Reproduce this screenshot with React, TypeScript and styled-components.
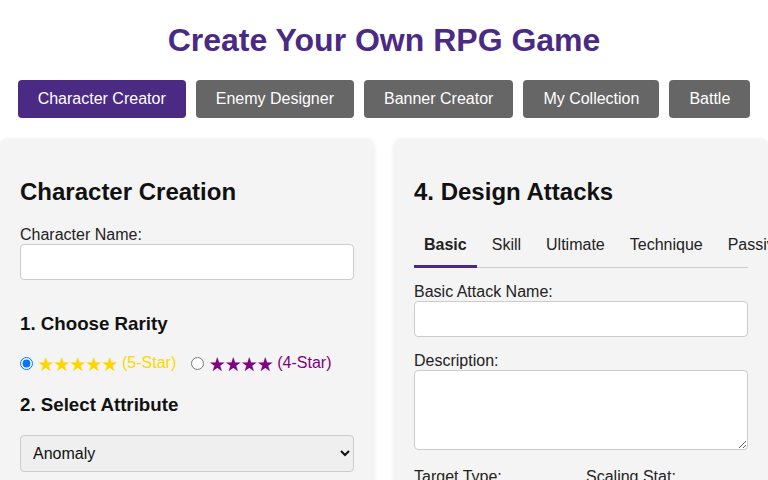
import styled, { createGlobalStyle, css } from 'styled-components'

const GlobalStyle = createGlobalStyle`
  body {
    margin: 0;
    font-family: "Liberation Sans", Arial, sans-serif;
    background: #fff;
    color: #222;
    overflow-x: hidden;
  }
  * { box-sizing: border-box; }
`

const Title = styled.h1`
  font-size: 32px;
  margin: 21.5px 0;
  text-align: center;
  color: #4a2a82;
  line-height: 37px;
`

const Nav = styled.nav`
  display: flex;
  justify-content: center;
  gap: 10px;
  margin-bottom: 20px;
`

const NavButton = styled.button<{ $active?: boolean }>`
  font-family: inherit;
  font-size: 16px;
  line-height: 18px;
  padding: 10px 20px;
  border: none;
  border-radius: 4px;
  color: #fff;
  background: ${(p) => (p.$active ? '#4a2a82' : '#666')};
  cursor: pointer;
`

const Columns = styled.div`
  display: grid;
  grid-template-columns: 1fr 1fr;
  gap: 20px;
`

const Panel = styled.section`
  display: flex;
  flex-direction: column;
  background: #f4f4f4;
  border-radius: 8px;
  padding: 20px;
  box-shadow: 0 2px 5px rgba(0, 0, 0, 0.08);
  overflow: hidden;
  min-height: 400px;
`

const PanelTitle = styled.h2`
  font-size: 24px;
  line-height: 28px;
  margin: 20px 0;
  color: #111;
`

const SectionTitle = styled.h3`
  font-size: 18.72px;
  line-height: 21.5px;
  margin: 18.2px 0;
  color: #111;
`

const FormGroup = styled.div`
  margin-bottom: 15px;
`

const Label = styled.label`
  display: block;
  font-size: 16px;
  line-height: 18px;
  color: #222;
`

const field = css`
  display: block;
  width: 100%;
  font-family: inherit;
  font-size: 16px;
  padding: 8px;
  border: 1px solid #ccc;
  border-radius: 4px;
  background: #fff;
`

const TextInput = styled.input`
  ${field};
  height: 36px;
`

const TextArea = styled.textarea`
  ${field};
  height: 80px;
  resize: vertical;
  margin-bottom: 3px;
`

const Select = styled.select`
  ${field};
  height: 37px;
  margin-top: 1px;
  background: #efefef;
  color: #111;
`

const RarityRow = styled.div`
  display: flex;
  align-items: center;
  height: 21px;
  margin-bottom: 2px;
`

const RarityOption = styled.label<{ $color: string }>`
  display: flex;
  align-items: center;
  margin-right: 15px;
  color: ${(p) => p.$color};
  font-size: 16px;

  input {
    margin: 0 5px 0 0;
    width: 13px;
    height: 13px;
  }
`

const Stars = styled.span`
  font-family: "Noto Sans CJK JP", "DejaVu Sans", sans-serif;
  margin-right: 4px;
`

const Tabs = styled.div`
  display: flex;
  gap: 5px;
  border-bottom: 1px solid #ccc;
  margin-bottom: 15px;
  white-space: nowrap;
`

const Tab = styled.button<{ $active?: boolean }>`
  font-family: inherit;
  font-size: 16px;
  line-height: 18.5px;
  padding: 10px;
  background: none;
  border: none;
  border-bottom: 3px solid ${(p) => (p.$active ? '#4a2a82' : 'transparent')};
  margin-bottom: -1px;
  color: #222;
  font-weight: ${(p) => (p.$active ? 'bold' : 'normal')};
  flex-shrink: 0;
`

const Row = styled.div`
  display: grid;
  grid-template-columns: 1fr 1fr;
  gap: 10px;
`

const tabs = ['Basic', 'Skill', 'Ultimate', 'Technique', 'Passive']
const navItems = ['Character Creator', 'Enemy Designer', 'Banner Creator', 'My Collection', 'Battle']

export default function App() {
  return (
    <>
      <GlobalStyle />
      <Title>Create Your Own RPG Game</Title>
      <Nav>
        {navItems.map((n, i) => (
          <NavButton key={n} $active={i === 0}>
            {n}
          </NavButton>
        ))}
      </Nav>
      <Columns>
        <Panel>
          <PanelTitle>Character Creation</PanelTitle>
          <FormGroup>
            <Label>Character Name:</Label>
            <TextInput type="text" />
          </FormGroup>
          <SectionTitle>1. Choose Rarity</SectionTitle>
          <RarityRow>
            <RarityOption $color="#ffd700">
              <input type="radio" name="rarity" defaultChecked />
              <Stars>★★★★★</Stars>(5-Star)
            </RarityOption>
            <RarityOption $color="#800080">
              <input type="radio" name="rarity" />
              <Stars>★★★★</Stars>(4-Star)
            </RarityOption>
          </RarityRow>
          <SectionTitle>2. Select Attribute</SectionTitle>
          <Select defaultValue="Anomaly">
            <option>Anomaly</option>
            <option>Fire</option>
            <option>Ice</option>
          </Select>
        </Panel>
        <Panel>
          <PanelTitle>4. Design Attacks</PanelTitle>
          <Tabs>
            {tabs.map((t, i) => (
              <Tab key={t} $active={i === 0}>
                {t}
              </Tab>
            ))}
          </Tabs>
          <FormGroup>
            <Label>Basic Attack Name:</Label>
            <TextInput type="text" />
          </FormGroup>
          <FormGroup>
            <Label>Description:</Label>
            <TextArea />
          </FormGroup>
          <Row>
            <Label>Target Type:</Label>
            <Label>Scaling Stat:</Label>
          </Row>
        </Panel>
      </Columns>
    </>
  )
}
